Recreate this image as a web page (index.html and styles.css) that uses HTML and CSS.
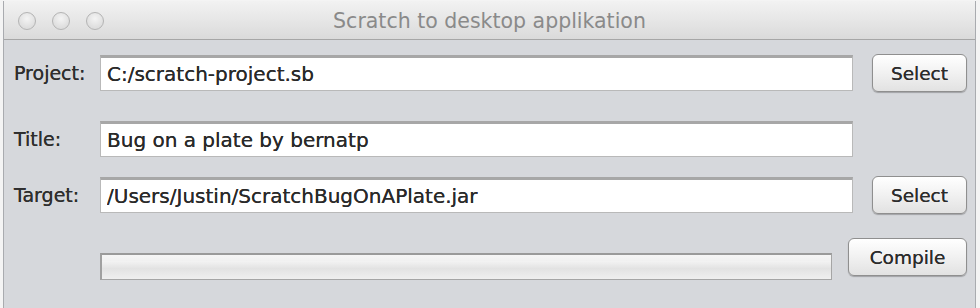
FILE: index.html
```html
<!DOCTYPE html>
<html lang="en">
<head>
    <meta charset="UTF-8">
    <title>Scratch to desktop applikation</title>
    <link rel="stylesheet" href="styles.css">
</head>
<body>
    <div class="window">
        <div class="titlebar">
            <div class="lights">
                <span class="light"></span>
                <span class="light"></span>
                <span class="light"></span>
            </div>
            <div class="title">Scratch to desktop applikation</div>
        </div>
        <div class="content">
            <div class="row row-project">
                <label>Project:</label>
                <input type="text" class="field" value="C:/scratch-project.sb">
                <button>Select</button>
            </div>
            <div class="row row-title">
                <label>Title:</label>
                <input type="text" class="field" value="Bug on a plate by bernatp">
            </div>
            <div class="row row-target">
                <label>Target:</label>
                <input type="text" class="field" value="/Users/Justin/ScratchBugOnAPlate.jar">
                <button>Select</button>
            </div>
            <div class="row row-compile">
                <div class="progress"><div class="progress-band"></div></div>
                <button class="compile">Compile</button>
            </div>
        </div>
    </div>
</body>
</html>
```

FILE: styles.css
```css
body {
    margin: 0;
    background: #f4f4f4;
    font-family: "DejaVu Sans", Verdana, sans-serif;
}

.window {
    margin: 1px 4px 0 3px;
    height: 307px;
    border-left: 1px solid #a9abaf;
    border-right: 1px solid #a9abaf;
    background: #d6d8dc;
    box-sizing: border-box;
}

.titlebar {
    position: relative;
    height: 38px;
    background: linear-gradient(#f2f2f2, #e4e4e4 60%, #dadada);
    border-bottom: 1px solid #a6a6a6;
}

.lights {
    display: flex;
    gap: 16px;
    padding: 11px 0 0 14px;
}

.light {
    width: 18px;
    height: 18px;
    border-radius: 50%;
    border: 1px solid #b4b4b4;
    background: radial-gradient(circle at 50% 35%, #f4f4f4, #dedede 70%);
    box-sizing: border-box;
}

.title {
    position: absolute;
    left: 0;
    right: 0;
    top: 8px;
    text-align: center;
    font-size: 20.5px;
    color: #8a8a8a;
}

.content {
    padding: 13px 8px 0 10px;
}

.row {
    display: flex;
    align-items: center;
    height: 40px;
}

.row-title {
    margin-top: 26px;
}

.row-target {
    margin-top: 16px;
}

.row-compile {
    margin-top: 23px;
    height: 42px;
    padding-left: 86px;
}

label {
    width: 86px;
    font-size: 19px;
    color: #2e2e2e;
    text-shadow: 0 0 0.6px #2e2e2e;
}

.field {
    width: 753px;
    height: 36px;
    box-sizing: border-box;
    border: 1px solid #b9b9b9;
    border-top: 3px solid #a7a7a7;
    background: #fff;
    padding: 0 6px;
    font-family: "DejaVu Sans", Verdana, sans-serif;
    font-size: 20px;
    color: #2a2a2a;
    text-shadow: 0 0 0.6px #2a2a2a;
    outline: none;
}

button {
    margin-left: auto;
    width: 95px;
    height: 38px;
    border: 1px solid #8f8f8f;
    border-radius: 6px;
    background: linear-gradient(#ffffff, #f1f1f1 50%, #e2e2e2);
    box-shadow: 0 1px 1px rgba(0,0,0,0.25);
    font-family: "DejaVu Sans", Verdana, sans-serif;
    font-size: 18.5px;
    color: #2c2c2c;
    text-shadow: 0 0 0.6px #2c2c2c;
    padding: 0;
}

.compile {
    width: 119px;
    align-self: flex-start;
}

.progress {
    align-self: flex-end;
    width: 732px;
    height: 27px;
    box-sizing: border-box;
    border: 1px solid #a5a5a5;
    border-top: 2px solid #9a9a9a;
    border-left: 2px solid #a0a0a0;
    background: linear-gradient(#f6f6f6, #ececec 45%, #e2e2e2 55%, #efefef);
    padding-top: 6px;
}

.progress-band {
    height: 6px;
    background: linear-gradient(#f3f3f3, #e6e6e6);
}
```
